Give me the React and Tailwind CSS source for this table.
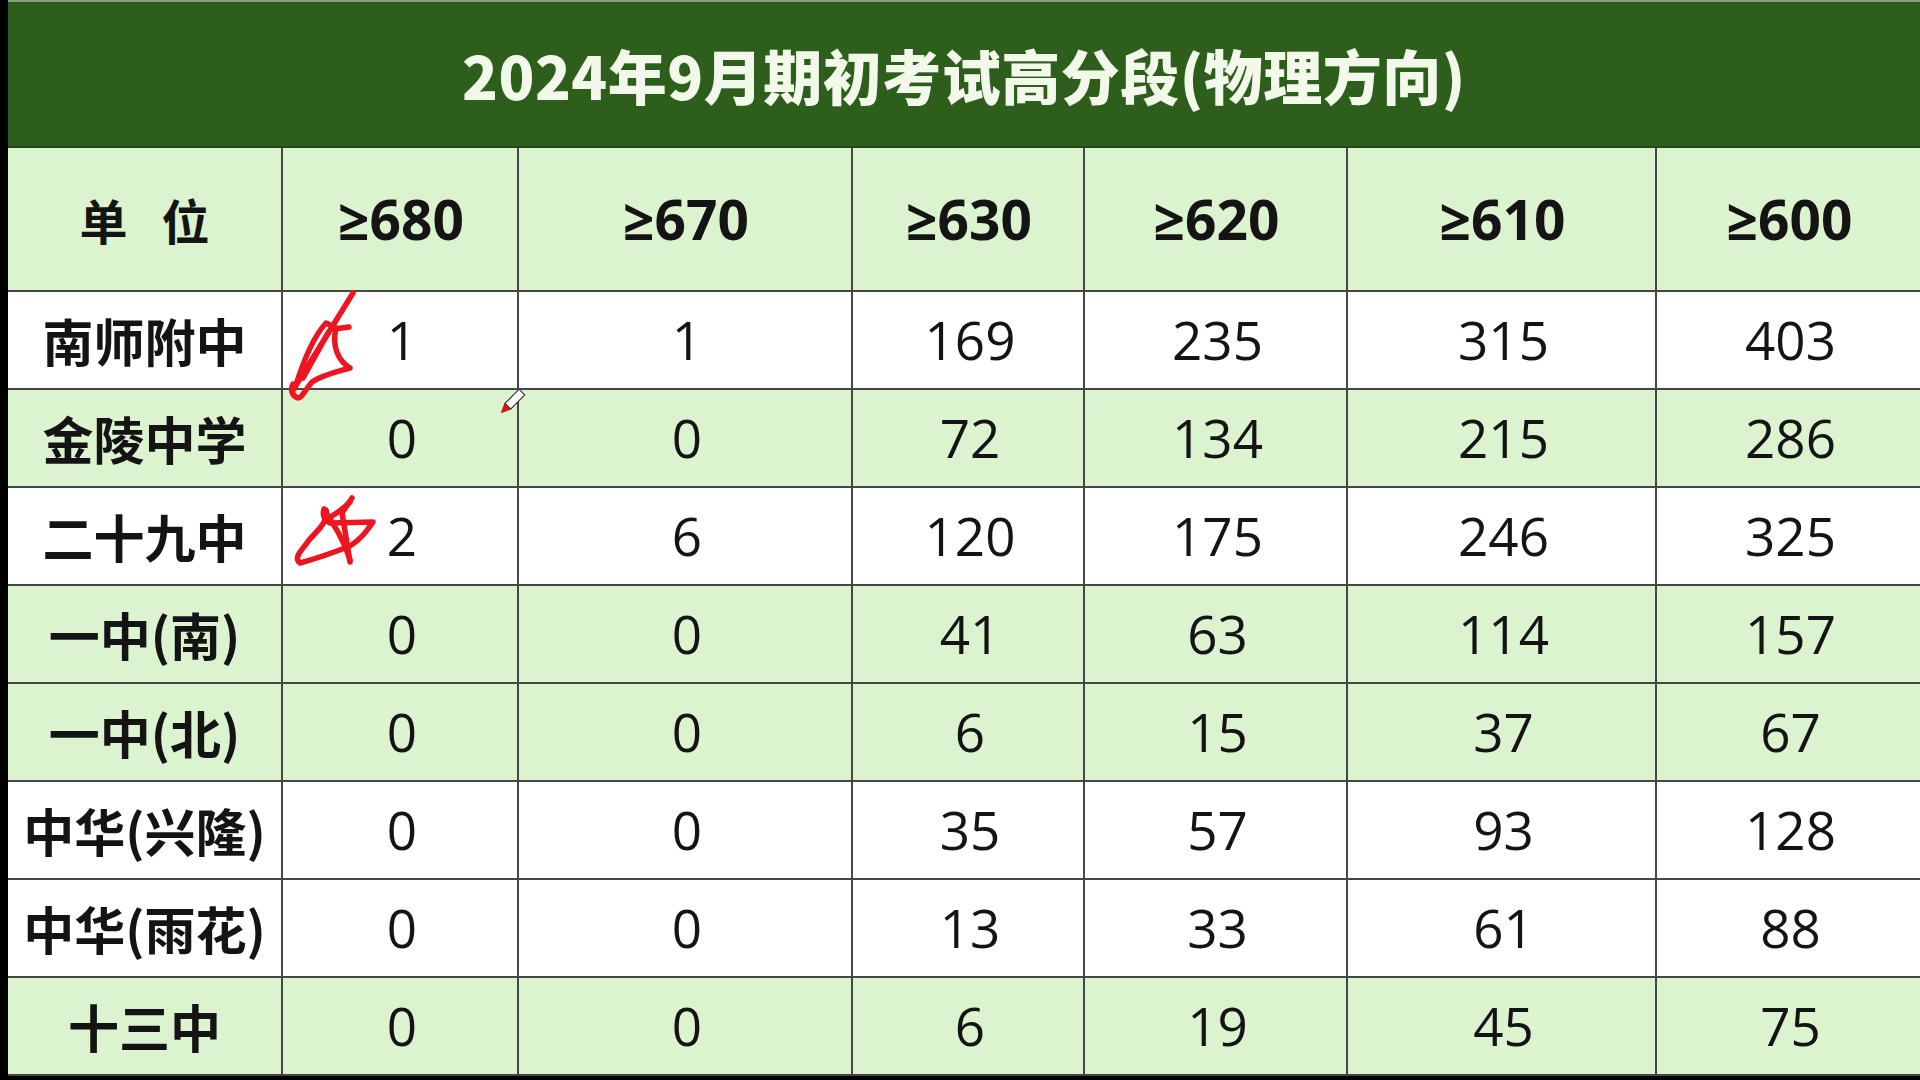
const COLS = ['≥680', '≥670', '≥630', '≥620', '≥610', '≥600'];

const ROWS = [
  { name: '南师附中', vals: [1, 1, 169, 235, 315, 403], green: false },
  { name: '金陵中学', vals: [0, 0, 72, 134, 215, 286], green: true },
  { name: '二十九中', vals: [2, 6, 120, 175, 246, 325], green: false },
  { name: '一中(南)', vals: [0, 0, 41, 63, 114, 157], green: true },
  { name: '一中(北)', vals: [0, 0, 6, 15, 37, 67], green: true },
  { name: '中华(兴隆)', vals: [0, 0, 35, 57, 93, 128], green: false },
  { name: '中华(雨花)', vals: [0, 0, 13, 33, 61, 88], green: false },
  { name: '十三中', vals: [0, 0, 6, 19, 45, 75], green: true },
];

const cjk = "font-['Noto_Sans_CJK_SC',sans-serif]";
const num = "font-['Open_Sans','Noto_Sans_CJK_SC',sans-serif]";

function Cell({ children, green, last, className = '' }) {
  return (
    <div
      className={`flex items-center justify-center border-b-2 border-[#464646] text-[#141414] ${last ? '' : 'border-r-2'} ${green ? 'bg-[#dcf3d0]' : 'bg-white'} ${className}`}
    >
      {children}
    </div>
  );
}

// red pen scribbles on the slide
function Annotations() {
  return (
    <svg
      className="absolute left-0 top-0 pointer-events-none"
      width="1920"
      height="1080"
      viewBox="0 0 1920 1080"
      fill="none"
    >
      <g stroke="#ee1420" strokeWidth="5.5" strokeLinecap="round" strokeLinejoin="round">
        <path d="M353 293 L293 390" />
        <path d="M295 388 C303 362 313 337 326 323 L336 328 C332 345 337 360 350 368 C336 372 322 375 312 382 C305 390 302 398 298 398 C292 396 290 390 293 384" />
        <path d="M334 329 L349 327" />
        <path d="M303 378 L328 333" />
        <path d="M352 498 L342 513 L350 562" />
        <path d="M324 509 C322 516 324 520 330 523 L373 522 C366 532 360 540 350 546 C335 552 318 558 300 563 C296 560 297 556 300 552 C307 542 314 534 320 528 C326 520 328 515 326 510" />
        <path d="M326 513 C334 525 344 540 350 560" />
        <path d="M327 519 C336 514 344 508 350 502" />
      </g>
      <g transform="translate(512 402) rotate(45)">
        <rect x="-4" y="-14" width="8" height="20" fill="#ffffff" stroke="#3a3a3a" strokeWidth="1.2" />
        <path d="M-4 6 L4 6 L0 15 Z" fill="#e3121b" stroke="#a00" strokeWidth="0.8" />
      </g>
    </svg>
  );
}

export default function App() {
  return (
    <div className="relative w-[1920px] h-[1080px] bg-black overflow-hidden">
      <div className="flex flex-col pl-[8px]">
        <div className="h-[2px] bg-[#8c9a86]" />
        <div className="h-[146px] bg-[#2d5e1c] border-b-2 border-[#23461a] flex items-center justify-center">
          <h1 className={`${cjk} text-[59px] font-black text-[#f2f9ea] tracking-[0.5px] leading-none`}>
            2024年9月期初考试高分段(物理方向)
          </h1>
        </div>
        <div className="grid grid-cols-[275px_236px_334px_232px_263px_309px_263px] grid-rows-[144px_repeat(8,98px)]">
          <Cell green>
            <div className={`${cjk} flex gap-[34px] text-[48px] font-bold`}>
              <span>单</span>
              <span>位</span>
            </div>
          </Cell>
          {COLS.map((c, i) => (
            <Cell key={c} green last={i === COLS.length - 1}>
              <span className={`${num} text-[55px] font-bold pl-[2px]`}>{c}</span>
            </Cell>
          ))}
          {ROWS.map((r) => (
            <div key={r.name} className="contents">
              <Cell green={r.green}>
                <span className={`${cjk} text-[51px] font-bold whitespace-nowrap`}>{r.name}</span>
              </Cell>
              {r.vals.map((v, i) => (
                <Cell key={i} green={r.green} last={i === r.vals.length - 1}>
                  <span className={`${num} text-[53px] pl-[4px]`}>{v}</span>
                </Cell>
              ))}
            </div>
          ))}
        </div>
      </div>
      <Annotations />
    </div>
  );
}
